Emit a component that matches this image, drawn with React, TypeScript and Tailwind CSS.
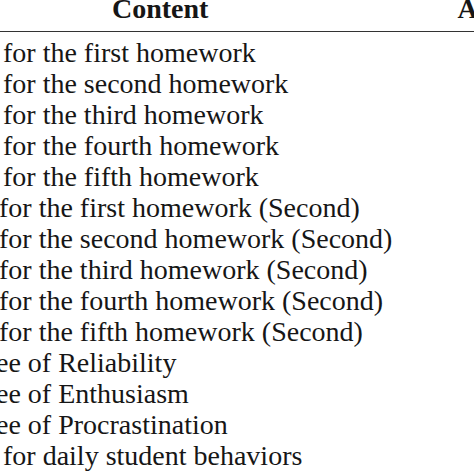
import React from 'react';

const rows: { text: string; indent: string }[] = [
    { text: 'for the first homework', indent: 'ml-[3px]' },
    { text: 'for the second homework', indent: 'ml-[3px]' },
    { text: 'for the third homework', indent: 'ml-[3px]' },
    { text: 'for the fourth homework', indent: 'ml-[3px]' },
    { text: 'for the fifth homework', indent: 'ml-[3px]' },
    { text: 'for the first homework (Second)', indent: 'ml-[-1px]' },
    { text: 'for the second homework (Second)', indent: 'ml-[-1px]' },
    { text: 'for the third homework (Second)', indent: 'ml-[-1px]' },
    { text: 'for the fourth homework (Second)', indent: 'ml-[-1px]' },
    { text: 'for the fifth homework (Second)', indent: 'ml-[-1px]' },
    { text: 'ee of Reliability', indent: 'ml-[-4px]' },
    { text: 'ee of Enthusiasm', indent: 'ml-[-4px]' },
    { text: 'ee of Procrastination', indent: 'ml-[-4px]' },
    { text: 'for daily student behaviors', indent: 'ml-[3px]' },
];

export default function App() {
    return (
        <div
            className="w-[474px] h-[474px] overflow-hidden bg-white text-[#161616] text-[28px]"
            style={{ fontFamily: '"Liberation Serif", "Times New Roman", serif' }}
        >
            {/* Header */}
            <div className="flex items-start leading-[17px] font-bold pb-[14px] border-b-[1.5px] border-[#333333] whitespace-nowrap">
                <span className="ml-[112px]">Content</span>
                <span className="ml-[249px]">A</span>
            </div>

            {/* Rows */}
            <div className="pt-[5px] leading-[31px]">
                {rows.map(row => (
                    <div key={row.text} className={`whitespace-nowrap ${row.indent}`}>
                        {row.text}
                    </div>
                ))}
            </div>
        </div>
    );
}
